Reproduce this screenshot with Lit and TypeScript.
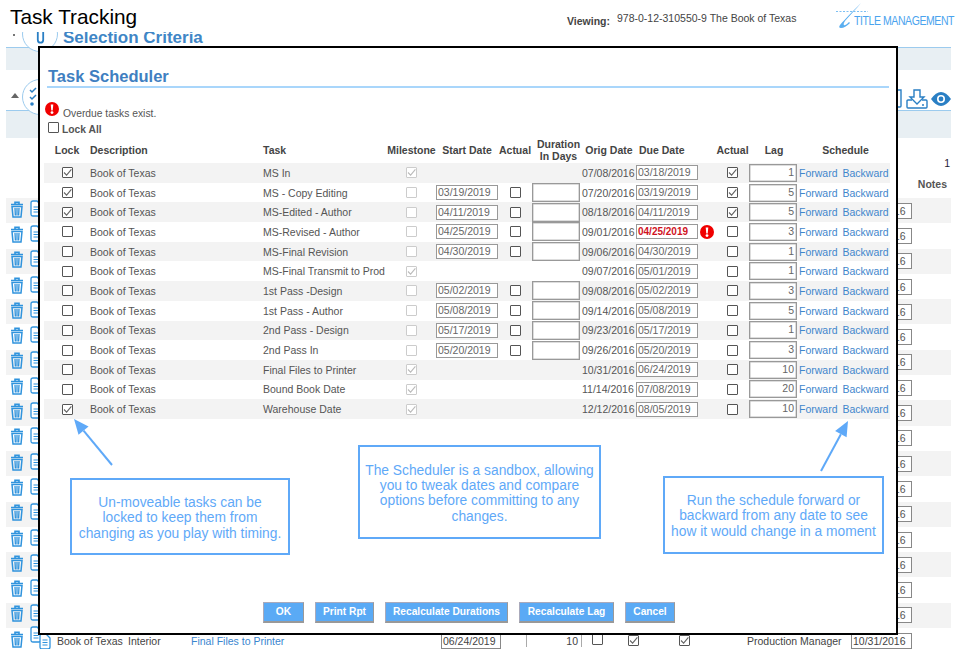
import { LitElement, html, css, svg } from "lit";
import { customElement } from "lit/decorators.js";

type Task = {
  lock: boolean; name: string; ms: boolean; start: string; orig: string;
  due: string; done: boolean; lag: number; late?: boolean;
};

const TASKS: Task[] = [
  { lock: true, name: "MS In", ms: true, start: "", orig: "07/08/2016", due: "03/18/2019", done: true, lag: 1 },
  { lock: true, name: "MS - Copy Editing", ms: false, start: "03/19/2019", orig: "07/20/2016", due: "03/19/2019", done: true, lag: 5 },
  { lock: true, name: "MS-Edited - Author", ms: false, start: "04/11/2019", orig: "08/18/2016", due: "04/11/2019", done: true, lag: 5 },
  { lock: false, name: "MS-Revised - Author", ms: false, start: "04/25/2019", orig: "09/01/2016", due: "04/25/2019", done: false, lag: 3, late: true },
  { lock: false, name: "MS-Final Revision", ms: false, start: "04/30/2019", orig: "09/06/2016", due: "04/30/2019", done: false, lag: 1 },
  { lock: false, name: "MS-Final Transmit to Prod", ms: true, start: "", orig: "09/07/2016", due: "05/01/2019", done: false, lag: 1 },
  { lock: false, name: "1st Pass -Design", ms: false, start: "05/02/2019", orig: "09/08/2016", due: "05/02/2019", done: false, lag: 3 },
  { lock: false, name: "1st Pass - Author", ms: false, start: "05/08/2019", orig: "09/14/2016", due: "05/08/2019", done: false, lag: 5 },
  { lock: false, name: "2nd Pass - Design", ms: false, start: "05/17/2019", orig: "09/23/2016", due: "05/17/2019", done: false, lag: 1 },
  { lock: false, name: "2nd Pass In", ms: false, start: "05/20/2019", orig: "09/26/2016", due: "05/20/2019", done: false, lag: 3 },
  { lock: false, name: "Final Files to Printer", ms: true, start: "", orig: "10/31/2016", due: "06/24/2019", done: false, lag: 10 },
  { lock: false, name: "Bound Book Date", ms: true, start: "", orig: "11/14/2016", due: "07/08/2019", done: false, lag: 20 },
  { lock: true, name: "Warehouse Date", ms: true, start: "", orig: "12/12/2016", due: "08/05/2019", done: false, lag: 10 },
];

const trash = html`<svg class="trash" viewBox="0 0 14 17" width="14" height="17">
  <path d="M1 3.5h12M5 3V1.4h4V3" fill="none" stroke="#2f93dd" stroke-width="1.6"/>
  <path d="M2 5.5l1 10.5h8l1-10.5z" fill="none" stroke="#2f93dd" stroke-width="1.5"/>
  <path d="M5 7l.4 7.5M7 7v7.5M9 7l-.4 7.5" fill="none" stroke="#2f93dd" stroke-width="1.3"/>
</svg>`;

const doc = html`<svg class="doc" viewBox="0 0 12 17" width="12" height="17">
  <path d="M1 3q0-2 2-2h4l4 4v9q0 2-2 2H3q-2 0-2-2z" fill="#fff" stroke="#2f93dd" stroke-width="1.3"/>
  <path d="M3.5 7h5M3.5 9.5h5M3.5 12h5" stroke="#2f93dd" stroke-width="1"/>
</svg>`;

const alert = html`<svg viewBox="0 0 14 14" width="14" height="14">
  <circle cx="7" cy="7" r="7" fill="#f00000"/>
  <path d="M5.7 2.6h2.6L7.7 8.6H6.3z" fill="#fff"/>
  <circle cx="7" cy="10.6" r="1.4" fill="#fff"/>
</svg>`;

const box = (checked: boolean, off = false) => html`<span class="cb ${off ? "off" : ""}">
  ${checked ? html`<svg viewBox="0 0 11 11" width="11" height="11"><path d="M2 5.5l2.6 2.6L9.4 2.4" fill="none" stroke="${off ? "#bbb" : "#666"}" stroke-width="1.1"/></svg>` : ""}
</span>`;

const arrow = (x1: number, y1: number, x2: number, y2: number) => {
  // head is drawn at the (x2,y2) end
  const a = Math.atan2(y2 - y1, x2 - x1);
  const l = 15, w = 6.5;
  const bx = x2 - Math.cos(a) * l, by = y2 - Math.sin(a) * l;
  const px = -Math.sin(a) * w, py = Math.cos(a) * w;
  return svg`<line x1=${x1} y1=${y1} x2=${bx} y2=${by} stroke="#5fa9f8" stroke-width="2"/>
    <polygon points="${x2},${y2} ${bx + px},${by + py} ${bx - px},${by - py}" fill="#5fa9f8"/>`;
};

@customElement("app-root")
export class AppRoot extends LitElement {
  static styles = css`
    :host {
      display: block;
      position: relative;
      width: 960px;
      height: 649px;
      overflow: hidden;
      background: #fff;
      font-family: "Liberation Sans", Arial, sans-serif;
      font-size: 10.5px;
      color: #555;
    }
    .top {
      position: relative;
      z-index: 2;
      height: 32px;
      background: #fff;
      display: flex;
      align-items: flex-start;
    }
    .apptitle { font-size: 20.8px; line-height: 24px; color: #000; margin: 5px 0 0 10px; width: 557px; flex: none; }
    .viewing { font-weight: bold; margin-top: 15px; width: 50px; flex: none; color: #444; }
    .viewed { margin-top: 12px; width: 218px; flex: none; color: #444; }
    .logo { display: flex; align-items: flex-end; margin-top: 3px; flex: none; width: 125px; }
    .logo svg { flex: none; }
    .logo span { font-size: 10.5px; line-height: 13px; letter-spacing: -0.42px; color: #4aa3ee; margin: 0 0 4px -17px; white-space: nowrap; transform: scaleY(1.2); }

    .sect { margin: 0 9px 0 6px; }
    .head {
      position: relative;
      border-bottom: 1px solid #9ccbee;
      box-sizing: border-box;
      display: flex;
      justify-content: flex-end;
      align-items: flex-end;
    }
    .head.a { height: 16px; }
    .head.b { height: 41px; }
    .band { background: #e8eff3; }
    .band.a { height: 22px; }
    .band.b { height: 27px; }
    .circle {
      position: absolute;
      left: 16px;
      width: 36px;
      height: 36px;
      border: 1px solid #9ccbee;
      border-radius: 50%;
      background: #fff;
      display: flex;
      align-items: center;
      justify-content: center;
      box-sizing: border-box;
    }
    .head.a .circle { top: -16px; }
    .head.b .circle { top: 9px; }
    .head.a h2 {
      position: absolute;
      left: 57px;
      top: -3px;
      margin: 0;
      font-size: 17px;
      line-height: 18px;
      color: #3f86c6;
    }
    .dot { position: absolute; left: 7px; top: 2px; width: 2px; height: 2px; background: #777; }
    .caret {
      position: absolute;
      left: 5px;
      top: 23px;
      width: 0;
      height: 0;
      border: 4px solid transparent;
      border-top: 0;
      border-bottom: 5px solid #666;
    }
    .tools { display: flex; align-items: center; gap: 3px; margin: 0 0 1px 0; }
    .tally { height: 60px; text-align: right; }
    .tally .n { color: #223; padding-top: 19px; line-height: 13px; height: 13px; margin-right: 1px; }
    .tally .notes { font-weight: bold; line-height: 13px; margin: 8px 4px 0 0; }

    .rows { margin: 0 9px 0 6px; }
    .row {
      height: 25.3px;
      display: grid;
      grid-template-columns: 4px 20px 27px 71px 63px 250px 64px 87px 36px 51px 68px 104px 61px;
      align-items: center;
    }
    .row:nth-child(odd) { background: #f3f3f3; }
    .row .trash { grid-column: 2; margin-top: -3px; }
    .row .doc { grid-column: 3; margin-top: -5px; }
    .row .date { grid-column: 13; }
    .row .date, .row .plain {
      box-sizing: border-box;
      width: 61px;
      height: 16px;
      line-height: 14px;
      border: 1px solid #888;
      background: #fff;
      padding-left: 1px;
    }
    .row .plain { width: 60px; }
    .row .link { color: #3a86cf; }
    .row .lag { text-align: right; border-left: 1px solid #aaa; border-right: 1px solid #aaa; padding-right: 3px; width: 56px; margin-left: 21px; box-sizing: border-box; }
    .row.last .docs { display: flex; align-items: flex-start; }
    .row.last .docs .doc { grid-column: auto; margin-top: -5px; }
    .row.last .docs .doc + .doc { margin: 2px 0 0 -3px; }
    .row.last { color: #444; }

    .modal {
      position: absolute;
      z-index: 3;
      left: 38px;
      top: 46px;
      width: 860px;
      height: 589px;
      box-sizing: border-box;
      border: 2px solid #000;
      background: #fff;
      display: flex;
      flex-direction: column;
    }
    .title {
      margin: 18px 7px 0 7px;
      padding-left: 1px;
      height: 20px;
      border-bottom: 2px solid #a9d6fb;
      font-size: 16.5px;
      font-weight: bold;
      line-height: 20px;
      color: #3f7fc1;
    }
    .overdue { display: flex; align-items: flex-end; height: 18px; margin: 12px 0 0 5px; gap: 4px; font-size: 10.3px; }
    .overdue svg { margin-bottom: 2px; }
    .overdue span { line-height: 12px; margin-bottom: -2px; }
    .lockall { display: flex; align-items: center; gap: 3px; height: 14px; margin: 4px 0 0 8px; font-weight: bold; font-size: 10.3px; }
    .lockall .cb { margin-top: -4px; }
    .table { margin: 1px 6px 0 4px; font-size: 10.5px; }
    .grid {
      display: grid;
      grid-template-columns: 46px 173px 124px 49px 62px 34px 50px 54px 64px 16px 33px 50px 93px;
      align-items: center;
    }
    .heads { height: 26px; font-weight: bold; color: #444; line-height: 12px; }
    .c { text-align: center; display: flex; justify-content: center; }
    .heads .c { display: block; }
    .heads .shift { padding-left: 3px; }
    .pad { padding-left: 3px; }
    .trow { height: 19.7px; }
    .trow:nth-child(odd) { background: #f3f3f3; }
    .cb {
      box-sizing: border-box;
      display: inline-block;
      width: 11px;
      height: 11px;
      border: 1px solid #555;
      background: #fff;
      border-radius: 1px;
      line-height: 0;
    }
    .cb svg { margin: -1px; }
    .cb.off { border-color: #ccc; }
    .input {
      box-sizing: border-box;
      width: 62px;
      height: 15px;
      line-height: 13px;
      border: 1px solid #999;
      background: #fff;
      padding-left: 1px;
      color: #666;
      white-space: nowrap;
    }
    .input.late { color: #d0121e; font-weight: bold; font-size: 10px; }
    .num {
      box-sizing: border-box;
      width: 48px;
      height: 18px;
      line-height: 15px;
      border: 1px solid #999;
      box-shadow: inset 0 0 0 0.5px #bbb;
      background: #fff;
      text-align: right;
      padding-right: 2px;
      color: #666;
    }
    .dur { height: 19px; }
    .flag { display: flex; }
    .sched { display: flex; gap: 5px; color: #3f86cc; white-space: nowrap; }

    .notes-area { position: relative; flex: 1; display: flex; align-items: flex-start; padding-left: 30px; }
    .arrows { position: absolute; left: 0; top: 0; }
    .callout {
      box-sizing: border-box;
      flex: none;
      border: 2px solid #5fa9f8;
      color: #5fa9f8;
      font-size: 13.8px;
      line-height: 15.3px;
      text-align: center;
      display: flex;
      align-items: center;
      justify-content: center;
      background: #fff;
    }
    .one { width: 220px; height: 77px; margin-top: 59px; padding-top: 3px; }
    .two { width: 243px; height: 94px; margin: 26px 0 0 68px; padding-top: 3px; }
    .three { width: 221px; height: 78px; margin: 57px 0 0 62px; padding-top: 2px; }

    .buttons { display: flex; gap: 11px; margin: 0 0 10px 223px; }
    .buttons span {
      box-sizing: border-box;
      height: 21px;
      line-height: 18px;
      background: #5aaaf5;
      color: #fff;
      font-weight: bold;
      font-size: 10.2px;
      text-align: center;
      border: 1px solid #aab;
      border-right-color: #999;
      border-bottom: 2px solid #999;
    }
  `;

  renderBackRow(i: number) {
    if (i == 17) {
      return html`<div class="row last">
        <span></span>${trash}
        <span class="docs">${doc}${doc}</span>
        <span>Book of Texas</span>
        <span>Interior</span>
        <span class="link">Final Files to Printer</span>
        <span class="plain">06/24/2019</span>
        <span class="lag">10</span>
        <span>${box(false)}</span>
        <span>${box(true)}</span>
        <span>${box(true)}</span>
        <span>Production Manager</span>
        <span class="date">10/31/2016</span>
      </div>`;
    }
    return html`<div class="row">
      <span></span>${trash}${doc}<span class="date">10/31/2016</span>
    </div>`;
  }

  renderTask(t: Task) {
    return html`<div class="grid trow">
      <span class="c">${box(t.lock)}</span>
      <span>Book of Texas</span>
      <span>${t.name}</span>
      <span class="c">${box(t.ms, true)}</span>
      <span>${t.start ? html`<div class="input">${t.start}</div>` : ""}</span>
      <span class="c">${t.start ? box(false) : ""}</span>
      <span>${t.start ? html`<div class="num dur"></div>` : ""}</span>
      <span>${t.orig}</span>
      <span><div class="input ${t.late ? "late" : ""}">${t.due}</div></span>
      <span class="flag">${t.late ? alert : ""}</span>
      <span class="c">${box(t.done)}</span>
      <span><div class="num">${t.lag}</div></span>
      <span class="sched"><span>Forward</span><span>Backward</span></span>
    </div>`;
  }

  render() {
    return html`
      <div class="top">
        <div class="apptitle">Task Tracking</div>
        <div class="viewing">Viewing:</div>
        <div class="viewed">978-0-12-310550-9 The Book of Texas</div>
        <div class="logo">
          <svg viewBox="0 0 36 28" width="36" height="28">
            <path d="M1 8.5h32" stroke="#5aaef0" stroke-width="0.8" stroke-dasharray="2 1.5"/>
            <path d="M26 0C20 6 10 16 5 22Q3 25 6 25Q10 25 15 20L14 19Q10 23 9 22Q8 21 10 18C16 11 22 5 26 0z" fill="#5aaef0"/>
          </svg>
          <span>TITLE MANAGEMENT</span>
        </div>
      </div>

      <div class="sect">
        <div class="head a">
          <span class="dot"></span>
          <div class="circle">
            <svg viewBox="0 0 10 18" width="9" height="18" style="margin-top:10px"><path d="M2 0v10q0 3 3 3t3-3V0" fill="none" stroke="#2a7fc4" stroke-width="2"/></svg>
          </div>
          <h2>Selection Criteria</h2>
        </div>
        <div class="band a"></div>
        <div class="head b">
          <span class="caret"></span>
          <div class="circle">
            <svg viewBox="0 0 12 22" width="12" height="22" style="margin-right:10px">
              <path d="M1 4l2 2 4-4M1 11l2 2 4-4" fill="none" stroke="#2a7fc4" stroke-width="1.5"/>
              <circle cx="3" cy="18" r="1.8" fill="#2a7fc4"/>
            </svg>
          </div>
          <div class="tools">
            <svg viewBox="0 0 18 20" width="18" height="20">
              <path d="M2 4v13q0 1 1 1h12q1 0 1-1V1H5" fill="#fff" stroke="#2a7fc4" stroke-width="1.4"/>
            </svg>
            <svg viewBox="0 0 22 20" width="22" height="20">
              <path d="M8 1h6v7h4l-7 7-7-7h4z" fill="#fff" stroke="#2a7fc4" stroke-width="1.4"/>
              <path d="M6 11H2q-1 0-1 1v6q0 1 1 1h18q1 0 1-1v-6q0-1-1-1h-4M16 16h2" fill="none" stroke="#2a7fc4" stroke-width="1.4"/>
            </svg>
            <svg viewBox="0 0 20 14" width="20" height="14">
              <path d="M0 7Q5 0 10 0t10 7q-5 7-10 7T0 7z" fill="#2a7fc4"/>
              <circle cx="10" cy="7" r="4" fill="#fff"/>
              <circle cx="10" cy="7" r="2.4" fill="#2a7fc4"/>
            </svg>
          </div>
        </div>
        <div class="band b"></div>
        <div class="tally">
          <div class="n">1</div>
          <div class="notes">Notes</div>
        </div>
      </div>

      <div class="rows">
        ${Array.from({ length: 18 }, (_, i) => this.renderBackRow(i))}
      </div>

      <div class="modal">
        <div class="title">Task Scheduler</div>
        <div class="overdue">${alert}<span>Overdue tasks exist.</span></div>
        <div class="lockall">${box(false)}<span>Lock All</span></div>
        <div class="table">
          <div class="grid heads">
            <span class="c">Lock</span>
            <span>Description</span>
            <span>Task</span>
            <span class="c">Milestone</span>
            <span class="c">Start Date</span>
            <span class="c">Actual</span>
            <span class="c shift">Duration In Days</span>
            <span class="c">Orig Date</span>
            <span class="pad">Due Date</span>
            <span></span>
            <span class="c">Actual</span>
            <span class="c">Lag</span>
            <span class="c">Schedule</span>
          </div>
          <div>${TASKS.map((t) => this.renderTask(t))}</div>
        </div>
        <div class="notes-area">
          <div class="callout one">Un-moveable tasks can be<br />locked to keep them from<br />changing as you play with timing.</div>
          <div class="callout two">The Scheduler is a sandbox, allowing<br />you to tweak dates and compare<br />options before committing to any<br />changes.</div>
          <div class="callout three">Run the schedule forward or<br />backward from any date to see<br />how it would change in a moment</div>
          <svg class="arrows" width="856" height="70">
            ${arrow(72, 46, 34, 0)}
            ${arrow(781, 52, 808, 2)}
          </svg>
        </div>
        <div class="buttons">
          <span style="width:41px">OK</span>
          <span style="width:59px">Print Rpt</span>
          <span style="width:123px">Recalculate Durations</span>
          <span style="width:95px">Recalculate Lag</span>
          <span style="width:50px">Cancel</span>
        </div>
      </div>
    `;
  }
}
